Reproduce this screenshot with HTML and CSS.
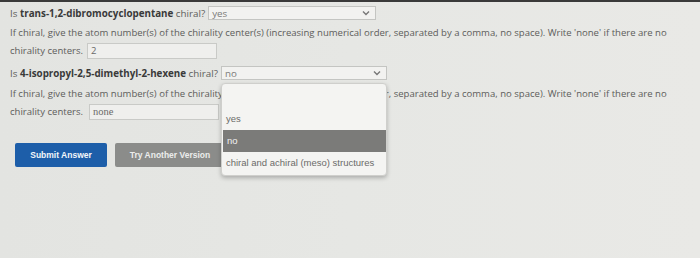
FILE: index.html
```html
<!DOCTYPE html>
<html>
<head>
<meta charset="utf-8">
<link rel="stylesheet" href="styles.css">
</head>
<body>
<div class="topbar"></div>
<div class="content">
  <div class="row q1">
    <span>Is <b>trans-1,2-dibromocyclopentane</b> chiral?</span>
    <span class="select s1"><span class="val">yes</span>
      <svg class="chev" width="8" height="6" viewBox="0 0 8 6"><path d="M1 1.5 L4 4.5 L7 1.5" fill="none" stroke="#777" stroke-width="1.4"/></svg>
    </span>
  </div>
  <p class="para p1">If chiral, give the atom number(s) of the chirality center(s) (increasing numerical order, separated by a comma, no space). Write 'none' if there are no chirality centers.<span class="input i1">2</span></p>

  <div class="row q2">
    <span>Is <b>4-isopropyl-2,5-dimethyl-2-hexene</b> chiral?</span>
    <span class="select s2"><span class="val">no</span>
      <svg class="chev" width="8" height="6" viewBox="0 0 8 6"><path d="M1 1.5 L4 4.5 L7 1.5" fill="none" stroke="#777" stroke-width="1.4"/></svg>
      <span class="menu">
        <span class="opt">yes</span>
        <span class="opt sel">no</span>
        <span class="opt">chiral and achiral (meso) structures</span>
      </span>
    </span>
  </div>
  <p class="para p2">If chiral, give the atom number(s) of the chirality center(s) (increasing numerical order, separated by a comma, no space). Write 'none' if there are no chirality centers.<span class="input i2 serif">none</span></p>

  <div class="buttons">
    <span class="btn submit">Submit Answer</span>
    <span class="btn another">Try Another Version</span>
  </div>
</div>
</body>
</html>
```
FILE: styles.css
```css
html, body {
  margin: 0;
  padding: 0;
}
body {
  width: 700px;
  height: 258px;
  overflow: hidden;
  background: linear-gradient(90deg, #e3e4e1 0%, #e6e7e4 50%, #e9e9e6 100%);
  font-family: "Open Sans", "Liberation Sans", sans-serif;
  font-size: 9.8px;
  color: #5d5d5b;
}
.topbar {
  height: 2px;
  background: #3a3a3a;
}
.content {
  padding: 4px 0 0 10px;
}
.row {
  display: flex;
  align-items: center;
  gap: 3px;
  height: 14px;
}
.row b {
  color: #3a3a3a;
  font-weight: 700;
}
.select {
  position: relative;
  display: flex;
  align-items: center;
  justify-content: space-between;
  box-sizing: border-box;
  height: 14px;
  border: 1px solid #c4c5c2;
  background: #f2f2f0;
  padding: 0 5px 0 3px;
  color: #7a7a78;
}
.s1 { width: 168px; }
.s2 { width: 166px; }
.para {
  margin: 4px 0 0 0;
  width: 670px;
  line-height: 18px;
  font-size: 9.55px;
}
.input {
  display: inline-block;
  box-sizing: border-box;
  width: 130px;
  height: 16px;
  line-height: 14px;
  margin: -3px 0 -3px 4px;
  border: 1px solid #c9cac7;
  background: #efefed;
  padding: 0 3px;
  color: #6a6a68;
  vertical-align: middle;
}
.i2 {
  margin-left: 6px;
}
.serif {
  font-family: "Liberation Serif", serif;
  font-size: 10.5px;
}
.q2 {
  margin-top: 6px;
}
.p2 {
  margin-top: 5px;
}
.menu {
  position: absolute;
  left: -1px;
  top: 16px;
  width: 166px;
  height: 93px;
  background: #f4f4f2;
  border: 1px solid #cfcfcc;
  border-radius: 4px;
  box-shadow: 0 2px 4px rgba(0,0,0,0.25);
  display: flex;
  flex-direction: column;
  padding-top: 24px;
  box-sizing: border-box;
  color: #6b6b69;
  z-index: 5;
}
.opt {
  height: 22px;
  line-height: 22px;
  padding-left: 4px;
  font-family: "Liberation Sans", sans-serif;
  font-size: 9.5px;
}
.opt.sel {
  background: #7b7b79;
  color: #f2f2f2;
  margin: 0 0 0 1px;
}
.buttons {
  display: flex;
  gap: 8px;
  margin: 22px 0 0 5px;
}
.btn {
  display: flex;
  align-items: center;
  justify-content: center;
  height: 24px;
  border-radius: 2px;
  font-family: "Liberation Sans", sans-serif;
  font-weight: 700;
  font-size: 8.5px;
  color: #f4f6fa;
}
.submit {
  width: 92px;
  background: #1d5ea9;
}
.another {
  width: 110px;
  background: #8b8c8a;
  color: #ececec;
}
```
